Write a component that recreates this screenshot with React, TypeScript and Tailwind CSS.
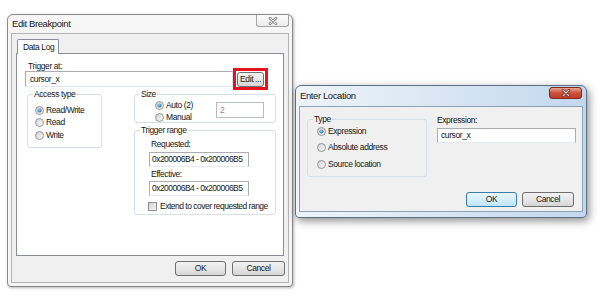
import React from "react";

function Radio({ checked }: { checked?: boolean }) {
  return (
    <svg width="9" height="9" viewBox="0 0 9 9" className="shrink-0">
      <defs>
        <linearGradient id="rg" x1="0" y1="0" x2="1" y2="1">
          <stop offset="0" stopColor="#cfcfcf" />
          <stop offset="1" stopColor="#fbfbfb" />
        </linearGradient>
        <radialGradient id="rd" cx="0.4" cy="0.35" r="0.7">
          <stop offset="0" stopColor="#9fd0f5" />
          <stop offset="1" stopColor="#1d5fa8" />
        </radialGradient>
      </defs>
      <circle cx="4.5" cy="4.5" r="4" fill="url(#rg)" stroke="#8a8c8e" strokeWidth="0.9" />
      {checked && <circle cx="4.5" cy="4.5" r="2.1" fill="url(#rd)" />}
    </svg>
  );
}

function XGlyph({ outer, inner }: { outer: string; inner: string }) {
  return (
    <svg width="10" height="8" viewBox="0 0 10 8">
      <path d="M2 1.2 L8 6.8 M8 1.2 L2 6.8" stroke={outer} strokeWidth="2.6" strokeLinecap="round" />
      <path d="M2 1.2 L8 6.8 M8 1.2 L2 6.8" stroke={inner} strokeWidth="1.1" strokeLinecap="round" />
    </svg>
  );
}

function Btn({ w, label, def }: { w: string; label: string; def?: boolean }) {
  return (
    <div
      className={`${w} h-[15px] rounded-[3px] border flex items-center justify-center text-[#1a1a1a] ${
        def
          ? "border-[#3d7bad] bg-gradient-to-b from-[#eaf6fd] to-[#bee6fd]"
          : "border-[#707070] bg-gradient-to-b from-[#f3f3f3] via-[#e6e6e6] to-[#d6d6d6]"
      }`}
    >
      {label}
    </div>
  );
}

function Group({
  label,
  className,
  children,
  labelBg,
}: {
  label: string;
  className: string;
  children?: React.ReactNode;
  labelBg: string;
}) {
  return (
    <div className={`relative border border-[#d5dfe5] rounded-[3px] ${className}`}>
      <span className={`absolute -top-[6px] left-[5px] px-[1px] leading-[10px] ${labelBg}`}>{label}</span>
      {children}
    </div>
  );
}

export default function App() {
  return (
    <div className="relative w-[600px] h-[299px] bg-white overflow-hidden font-['Liberation_Sans',Arial,sans-serif] text-[8.5px] tracking-[-0.4px] text-[#161616]">
      {/* Edit Breakpoint window */}
      <div className="absolute left-[7px] top-[14px] w-[286px] h-[273px] rounded-t-[6px] rounded-b-[4px] border border-[#8a8a8a] bg-[#f6f6f6] flex flex-col shadow-[1px_1px_3px_rgba(0,0,0,0.3)]">
        <div className="relative h-[18px] shrink-0 flex items-center pl-[4px] text-[9.5px] text-[#222]">
          Edit Breakpoint
          <div className="absolute right-[3px] top-0 w-[33px] h-[12px] rounded-b-[3px] border border-t-0 border-[#a3a3a3] bg-gradient-to-b from-[#fbfbfb] to-[#ececec] flex items-center justify-center">
            <XGlyph outer="#7d7d7d" inner="#f4f4f4" />
          </div>
        </div>
        <div className="mx-[3px] mb-[3px] flex-1 border border-[#b3b3b3] bg-[#f0f0f0] flex flex-col">
          <div className="pt-[5px] px-[4px]">
            <div className="flex">
              <div className="relative z-10 ml-[1px] -mb-px w-[42px] h-[15px] border border-b-0 border-[#898c95] rounded-t-[2px] bg-white flex items-center pl-[5px]">
                Data Log
              </div>
            </div>
            <div className="h-[203px] border border-[#898c95] bg-white flex flex-col">
              <div className="mt-[7px] h-[10px] leading-[10px] pl-[11px]">Trigger at:</div>
              <div className="flex items-center h-[16px] pl-[8px]">
                <div className="w-[208px] h-[16px] border border-[#abadb3] border-r-[#dbdfe6] border-b-[#e3e9ef] flex items-center pl-[4px]">
                  cursor_x
                </div>
                <div className="w-[35px] h-[22px] shrink-0 border-[3px] border-[#e5131f] flex items-center justify-center">
                  <Btn w="w-[27px]" label="Edit ..." />
                </div>
              </div>
              <div className="mt-[7px] flex pl-[10px]">
                <Group label="Access type" className="w-[75px] h-[54px] pt-[9px] pl-[7px]" labelBg="bg-white">
                  {[
                    ["Read/Write", true],
                    ["Read", false],
                    ["Write", false],
                  ].map(([t, c]) => (
                    <div key={t as string} className="h-[12.5px] flex items-center gap-[2px]">
                      <Radio checked={c as boolean} />
                      <span>{t as string}</span>
                    </div>
                  ))}
                </Group>
                <div className="ml-[32px] flex flex-col gap-[7px]">
                  <Group label="Size" className="w-[142px] h-[29px] flex items-start" labelBg="bg-white">
                    <div className="w-[81px] pl-[20px] pt-[4px]">
                      <div className="h-[12px] flex items-center gap-[2px]">
                        <Radio checked />
                        <span>Auto (2)</span>
                      </div>
                      <div className="h-[12px] flex items-center gap-[2px]">
                        <Radio />
                        <span>Manual</span>
                      </div>
                    </div>
                    <div className="mt-[7px] w-[48px] h-[16px] border border-[#b7bcc1] flex items-center pl-[3px] text-[#8a8a8a]">
                      2
                    </div>
                  </Group>
                  <Group label="Trigger range" className="w-[142px] h-[85px] pl-[14px] pt-[8px] flex flex-col" labelBg="bg-white">
                    <div className="h-[10px] leading-[10px] pl-[2px]">Requested:</div>
                    <div className="mt-[3px] w-[100px] h-[15px] border border-[#abadb3] border-b-[#e3e9ef] flex items-center pl-[2px] tracking-[-0.55px]">
                      0x200006B4 - 0x200006B5
                    </div>
                    <div className="mt-[2px] h-[10px] leading-[10px] pl-[2px]">Effective:</div>
                    <div className="mt-[2px] w-[100px] h-[15px] border border-[#abadb3] border-b-[#e3e9ef] flex items-center pl-[2px] tracking-[-0.55px]">
                      0x200006B4 - 0x200006B5
                    </div>
                    <div className="mt-[5px] h-[11px] flex items-center gap-[3px] -ml-[1px] tracking-[-0.5px]">
                      <div className="w-[9px] h-[9px] border border-[#8f8f8f] bg-gradient-to-br from-[#d2d2d2] to-[#f6f6f6]" />
                      <span>Extend to cover requested range</span>
                    </div>
                  </Group>
                </div>
              </div>
            </div>
          </div>
          <div className="mt-[5px] flex justify-end gap-[6px] pr-[3px]">
            <Btn w="w-[51px]" label="OK" />
            <Btn w="w-[53px]" label="Cancel" />
          </div>
        </div>
      </div>

      {/* Enter Location window */}
      <div className="absolute left-[295px] top-[85px] w-[292px] h-[133px] rounded-t-[6px] rounded-b-[4px] border border-[#5d6f82] bg-gradient-to-r from-[#eef4fa] via-[#d9e6f3] to-[#c2d7ee] flex flex-col shadow-[2px_3px_8px_rgba(0,0,0,0.45)]">
        <div className="relative h-[20px] shrink-0 flex items-center pl-[4px] pt-[1px] text-[9.5px] text-[#1a1a1a]">
          Enter Location
          <div className="absolute right-[4px] top-[1px] w-[33px] h-[12px] rounded-[3px] border border-[#7a2a20] bg-gradient-to-b from-[#e8a493] via-[#c9523c] to-[#c23a26] flex items-center justify-center">
            <XGlyph outer="#6e1d12" inner="#ffffff" />
          </div>
        </div>
        <div className="mx-[3px] mb-[5px] flex-1 border border-[#8da1b6] bg-[#f0f0f0] flex flex-col">
          <div className="flex pt-[8px] pl-[7px]">
            <Group label="Type" className="mt-[4px] w-[120px] h-[58px] pt-[5px] pl-[9px] flex flex-col gap-[4.5px]" labelBg="bg-[#f0f0f0]">
              {[
                ["Expression", true],
                ["Absolute address", false],
                ["Source location", false],
              ].map(([t, c]) => (
                <div key={t as string} className="h-[12px] flex items-center gap-[2px]">
                  <Radio checked={c as boolean} />
                  <span>{t as string}</span>
                </div>
              ))}
            </Group>
            <div className="ml-[10px] flex flex-col">
              <div className="h-[10px] leading-[10px]">Expression:</div>
              <div className="mt-[3px] w-[139px] h-[15px] border border-[#abadb3] border-b-[#e3e9ef] bg-white flex items-center pl-[3px]">
                cursor_x
              </div>
            </div>
          </div>
          <div className="mt-[15px] flex justify-end gap-[5px] pr-[8px]">
            <Btn w="w-[51px]" label="OK" def />
            <Btn w="w-[52px]" label="Cancel" />
          </div>
        </div>
      </div>
    </div>
  );
}
